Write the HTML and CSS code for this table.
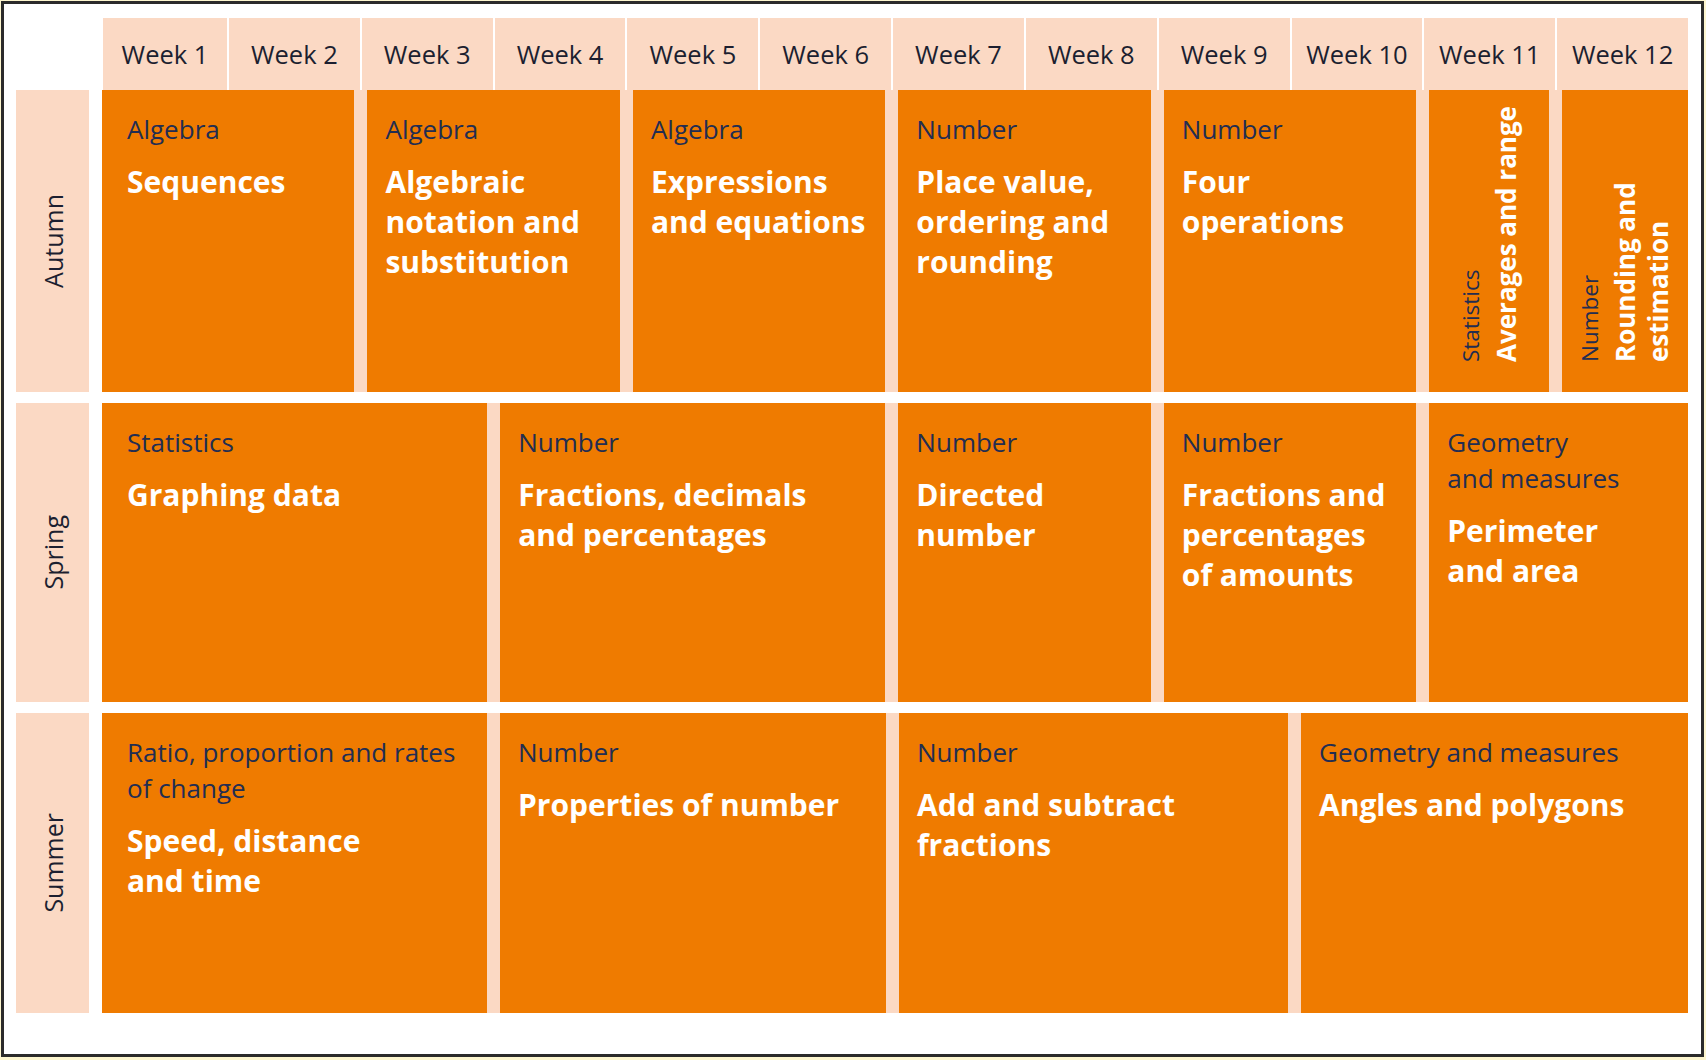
FILE: index.html
```html
<!DOCTYPE html>
<html lang="en">
<head>
<meta charset="utf-8">
<title>Year overview</title>
<link rel="stylesheet" href="styles.css">
</head>
<body>
<div class="frame">
  <div class="weeks">
    <div class="week">Week 1</div>
    <div class="week">Week 2</div>
    <div class="week">Week 3</div>
    <div class="week">Week 4</div>
    <div class="week">Week 5</div>
    <div class="week">Week 6</div>
    <div class="week">Week 7</div>
    <div class="week">Week 8</div>
    <div class="week">Week 9</div>
    <div class="week">Week 10</div>
    <div class="week">Week 11</div>
    <div class="week">Week 12</div>
  </div>
  <div class="terms">
    <div class="term-label"><span>Autumn</span></div>
    <div class="units">
      <div class="unit span-2"><p class="strand">Algebra</p><p class="topic">Sequences</p></div>
      <div class="unit span-2"><p class="strand">Algebra</p><p class="topic">Algebraic<br>notation and<br>substitution</p></div>
      <div class="unit span-2"><p class="strand">Algebra</p><p class="topic">Expressions<br>and equations</p></div>
      <div class="unit span-2"><p class="strand">Number</p><p class="topic">Place value,<br>ordering and<br>rounding</p></div>
      <div class="unit span-2"><p class="strand">Number</p><p class="topic">Four<br>operations</p></div>
      <div class="unit unit-vertical"><div class="vert"><p class="strand">Statistics</p><p class="topic">Averages and range</p></div></div>
      <div class="unit unit-vertical"><div class="vert"><p class="strand">Number</p><p class="topic">Rounding and<br>estimation</p></div></div>
    </div>

    <div class="term-label"><span>Spring</span></div>
    <div class="units">
      <div class="unit span-3"><p class="strand">Statistics</p><p class="topic">Graphing data</p></div>
      <div class="unit span-3"><p class="strand">Number</p><p class="topic">Fractions, decimals<br>and percentages</p></div>
      <div class="unit span-2"><p class="strand">Number</p><p class="topic">Directed<br>number</p></div>
      <div class="unit span-2"><p class="strand">Number</p><p class="topic">Fractions and<br>percentages<br>of amounts</p></div>
      <div class="unit span-2"><p class="strand">Geometry<br>and measures</p><p class="topic">Perimeter<br>and area</p></div>
    </div>

    <div class="term-label"><span>Summer</span></div>
    <div class="units units-summer">
      <div class="unit"><p class="strand">Ratio, proportion and rates<br>of change</p><p class="topic">Speed, distance<br>and time</p></div>
      <div class="unit"><p class="strand">Number</p><p class="topic">Properties of number</p></div>
      <div class="unit"><p class="strand">Number</p><p class="topic">Add and subtract<br>fractions</p></div>
      <div class="unit"><p class="strand">Geometry and measures</p><p class="topic">Angles and polygons</p></div>
    </div>
  </div>
</div>
</body>
</html>
```

FILE: styles.css
```css
html, body {
  margin: 0;
  padding: 0;
  background: #fdf6cf;
}

body {
  font-family: "Open Sans", "Noto Sans", sans-serif;
  color: #1f2744;
}

.frame {
  box-sizing: border-box;
  width: 1703px;
  height: 1056px;
  margin: 1px 0 0 1px;
  border: 3px solid #2b2b2b;
  background: #ffffff;
  padding: 14px 0 0 12px;
}

.weeks {
  display: grid;
  grid-template-columns: 124px repeat(11, minmax(0, 1fr));
  column-gap: 2px;
  width: 1585px;
  height: 72px;
  margin-left: 87px;
}

.week {
  background: #fbd9c4;
  display: flex;
  align-items: center;
  justify-content: center;
  font-size: 25.5px;
  color: #1c1f30;
  white-space: nowrap;
}

.terms {
  display: grid;
  grid-template-columns: 73px 1586px;
  grid-template-rows: 302px 299px 300px;
  column-gap: 13px;
  row-gap: 11px;
}

.term-label {
  background: #fbd9c4;
  display: flex;
  align-items: center;
  justify-content: center;
}

.term-label span {
  writing-mode: vertical-rl;
  transform: rotate(180deg);
  font-size: 25px;
  line-height: 30px;
  color: #1c1f30;
}

.units {
  display: grid;
  grid-template-columns: repeat(11, minmax(0, 1fr)) 126px;
  grid-template-rows: minmax(0, 1fr);
  column-gap: 13px;
  background: #fbd9c4;
  min-height: 0;
  overflow: hidden;
}

.units-summer {
  grid-template-columns: 385px 386px 389px 1fr;
}

.unit {
  background: #ef7b00;
  padding: 21px 10px 0 18px;
  min-width: 0;
  min-height: 0;
}

.unit:first-child {
  padding-left: 25px;
}

.span-2 { grid-column: span 2; }
.span-3 { grid-column: span 3; }

.strand {
  margin: 0;
  font-size: 26px;
  line-height: 36px;
  color: #222d52;
  white-space: nowrap;
}

.topic {
  margin: 0;
  margin-block-start: 15px;
  font-size: 30px;
  font-weight: 700;
  line-height: 40px;
  color: #ffffff;
  white-space: nowrap;
}

.unit-vertical {
  display: flex;
  justify-content: center;
  padding: 0;
}

.vert {
  writing-mode: vertical-rl;
  transform: rotate(180deg);
  box-sizing: border-box;
  height: 100%;
  padding: 30px 0;
}

.vert .strand {
  font-size: 22.5px;
  line-height: 30px;
}

.vert .topic {
  margin-block-start: 4px;
  font-size: 26px;
  line-height: 33px;
}
```
